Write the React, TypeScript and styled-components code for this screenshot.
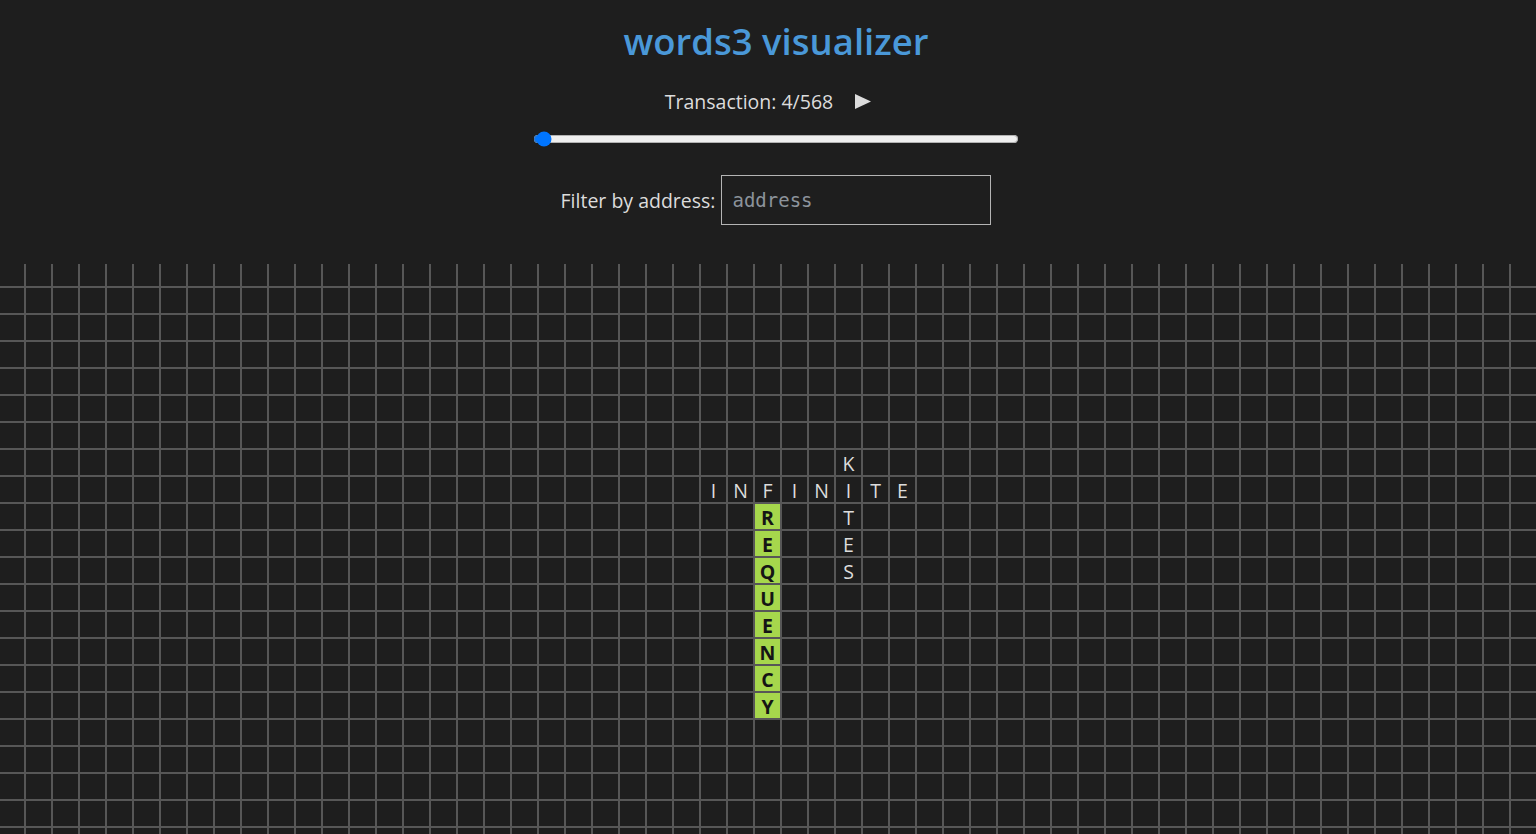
import React from "react";
import styled, { createGlobalStyle } from "styled-components";

const Global = createGlobalStyle`
  html, body {
    margin: 0;
    padding: 0;
    background: #1e1e1e;
    overflow: hidden;
  }
  body {
    font-family: "Open Sans", "Noto Sans", sans-serif;
    color: #dcdcdc;
  }
`;

const Page = styled.div`
  display: flex;
  flex-direction: column;
  width: 100%;
  height: 834px;
`;

const Header = styled.header`
  display: flex;
  flex-direction: column;
  align-items: center;
  padding: 17px 0 0 16px;
`;

const Title = styled.h1`
  margin: 0;
  font-size: 36.5px;
  line-height: 48px;
  font-weight: 600;
  color: #4a98d8;
`;

const TxRow = styled.div`
  display: flex;
  align-items: center;
  height: 28px;
  margin-top: 22px;
  padding-right: 16px;
  font-size: 19.5px;
`;

const PlayButton = styled.button`
  display: flex;
  align-items: center;
  background: none;
  border: none;
  padding: 0;
  margin-left: 22px;
  cursor: pointer;
`;

const Slider = styled.input`
  width: 486px;
  height: 16px;
  margin: 16px 0 0 0;
  accent-color: #0075ff;
`;

const FilterRow = styled.div`
  display: flex;
  align-items: center;
  gap: 6px;
  margin-top: 28px;
  font-size: 19.5px;
`;

const AddressInput = styled.input`
  box-sizing: border-box;
  width: 270px;
  height: 50px;
  padding: 0 10px;
  background: transparent;
  border: 1px solid #b4b4b4;
  color: #dcdcdc;
  font-family: "DejaVu Sans Mono", monospace;
  font-size: 19px;
  outline: none;
  &::placeholder {
    color: #8c939b;
  }
`;

const Board = styled.div`
  margin-top: 39px;
  flex: 1;
  overflow: hidden;
`;

const COLS = 57;
const ROWS = 22;

const Grid = styled.div`
  display: grid;
  grid-template-columns: repeat(${COLS}, 27px);
  grid-auto-rows: 27px;
  margin: -4px 0 0 -2px;
  width: max-content;
`;

const Cell = styled.div<{ $filled?: boolean }>`
  box-sizing: border-box;
  width: 27px;
  height: 27px;
  border: 1px solid #575757;
  display: flex;
  align-items: center;
  justify-content: center;
  font-size: 19.5px;
  line-height: 1;
  padding-top: 2px;
  background: ${(p) => (p.$filled ? "#a6d74c" : "transparent")};
  color: ${(p) => (p.$filled ? "#151515" : "#dcdcdc")};
  font-weight: ${(p) => (p.$filled ? 700 : 400)};
`;

type Letter = { ch: string; filled: boolean };

function buildLetters(): Map<string, Letter> {
  const m = new Map<string, Letter>();
  const put = (c: number, r: number, ch: string, filled = false) =>
    m.set(`${c},${r}`, { ch, filled });
  "INFINITE".split("").forEach((ch, i) => put(26 + i, 8, ch));
  "KITES".split("").forEach((ch, i) => {
    if (i !== 1) put(31, 7 + i, ch);
  });
  "REQUENCY".split("").forEach((ch, i) => put(28, 9 + i, ch, true));
  return m;
}

const letters = buildLetters();

export default function App() {
  const cells: React.ReactNode[] = [];
  for (let r = 0; r < ROWS; r++) {
    for (let c = 0; c < COLS; c++) {
      const l = letters.get(`${c},${r}`);
      cells.push(
        <Cell key={`${c}-${r}`} $filled={l?.filled}>
          {l?.ch}
        </Cell>
      );
    }
  }
  return (
    <>
      <Global />
      <Page>
        <Header>
          <Title>words3 visualizer</Title>
          <TxRow>
            <span>Transaction: 4/568</span>
            <PlayButton aria-label="play">
              <svg width="16" height="15" viewBox="0 0 16 15">
                <polygon points="0,0 16,7.5 0,15" fill="#dcdcdc" />
              </svg>
            </PlayButton>
          </TxRow>
          <Slider type="range" min={0} max={568} defaultValue={4} />
          <FilterRow>
            <span>Filter by address:</span>
            <AddressInput placeholder="address" />
          </FilterRow>
        </Header>
        <Board>
          <Grid>{cells}</Grid>
        </Board>
      </Page>
    </>
  );
}
